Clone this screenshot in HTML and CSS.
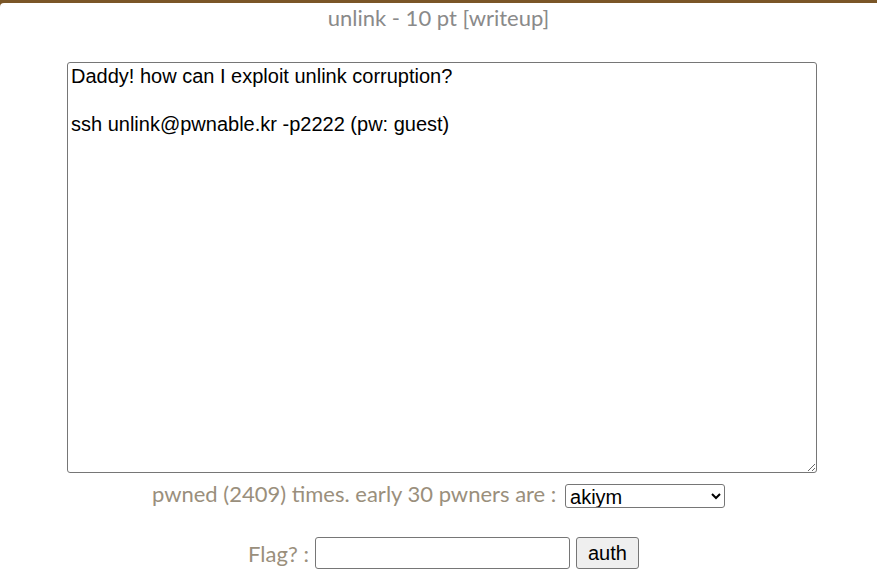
FILE: index.html
```html
<!DOCTYPE html>
<html lang="en">
<head>
    <meta charset="UTF-8">
    <title>unlink - pwnable.kr</title>
    <link rel="stylesheet" href="styles.css">
</head>
<body>
    <div class="card">
        <h2 class="title">unlink - 10 pt [writeup]</h2>
        <textarea class="desc" readonly>Daddy! how can I exploit unlink corruption?

ssh unlink@pwnable.kr -p2222 (pw: guest)</textarea>
        <div class="pwners">
            pwned (2409) times. early 30 pwners are :
            <select class="pwner-list">
                <option>akiym</option>
            </select>
        </div>
        <form class="flag-form" onsubmit="return false">
            <span class="flag-label">Flag? :</span>
            <input type="text" class="flag-input">
            <button class="auth-btn">auth</button>
        </form>
    </div>
</body>
</html>
```

FILE: styles.css
```css
body {
    margin: 0;
    padding-top: 3px;
    background: #7a5627;
    font-family: Lato, 'Open Sans', sans-serif;
}

.card {
    background: #fff;
    border-radius: 4px 0 0 0;
    min-height: 581px;
    text-align: center;
}

.title {
    margin: 0;
    padding-top: 1px;
    height: 58px;
    font-size: 22px;
    font-weight: normal;
    line-height: 28px;
    color: #8a8a8a;
}

.desc {
    display: block;
    box-sizing: border-box;
    width: 750px;
    height: 411px;
    margin: 0 0 0 67px;
    padding: 1px 3px;
    border: 1px solid #767676;
    border-radius: 3px;
    font-family: 'Liberation Sans', Arial, sans-serif;
    font-size: 20px;
    line-height: 24px;
    color: #000;
    resize: both;
}

.pwners {
    margin-top: 8px;
    font-size: 22px;
    line-height: 26px;
    color: #9a8f7c;
}

.pwner-list {
    width: 160px;
    height: 24px;
    margin-left: 3px;
    font-family: 'Liberation Sans', Arial, sans-serif;
    font-size: 20px;
    background: #fff;
    border: 1px solid #767676;
    border-radius: 3px;
    vertical-align: middle;
}

.flag-form {
    margin-top: 29px;
    display: flex;
    justify-content: center;
    align-items: center;
    gap: 6px;
}

.flag-label {
    font-size: 22px;
    color: #9a8f7c;
    margin-left: 10px;
}

.flag-input {
    box-sizing: border-box;
    width: 255px;
    height: 32px;
    border: 1px solid #767676;
    border-radius: 3px;
    font-size: 18px;
}

.auth-btn {
    box-sizing: border-box;
    width: 63px;
    height: 32px;
    padding: 0;
    border: 1px solid #767676;
    border-radius: 3px;
    background: #efefef;
    font-family: 'Liberation Sans', Arial, sans-serif;
    font-size: 20px;
    color: #000;
}
```
